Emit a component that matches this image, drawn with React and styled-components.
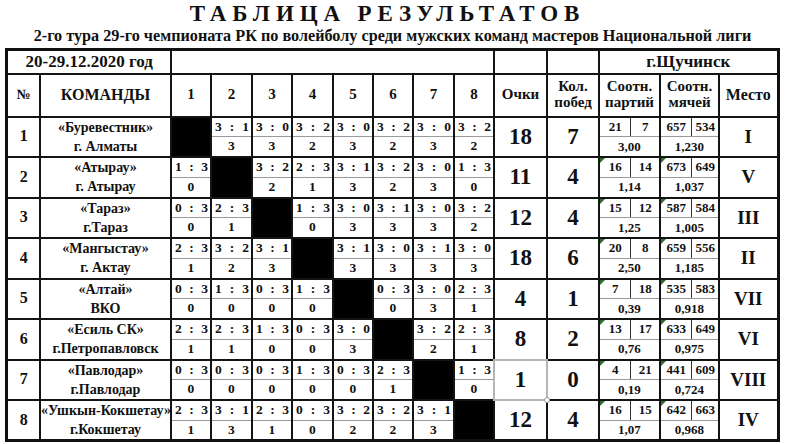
import React from "react";
import styled, { createGlobalStyle, css } from "styled-components";

const GlobalStyle = createGlobalStyle`
  html, body { margin: 0; padding: 0; background: #fff; }
  body { font-family: "Liberation Serif", "Times New Roman", serif; color: #111; }
`;

const Page = styled.div`
  width: 785px;
  display: flex;
  flex-direction: column;
  align-items: center;
`;

const Title = styled.h1`
  margin: 0 10px 0 0;
  font-size: 23px;
  line-height: 27px;
  font-weight: bold;
  letter-spacing: 5.9px;
  text-align: center;
`;

const Subtitle = styled.div`
  margin: 0 0 3px 0;
  font-size: 16.2px;
  line-height: 18px;
  font-weight: bold;
  text-align: center;
  white-space: nowrap;
`;

const Table = styled.table`
  border-collapse: collapse;
  table-layout: fixed;
  width: 771px;
  border: 3px solid #111;
  font-weight: bold;
`;

const Td = styled.td`
  position: relative;
  border: 2px solid #141414;
  padding: 0;
  text-align: center;
  vertical-align: middle;
  font-size: ${(p) => p.$size || 13}px;
  line-height: 1.05;
  white-space: nowrap;
  overflow: visible;
  ${(p) => p.$black && css`background: #000;`}
  ${(p) => p.$upper && css`border-bottom: 1px solid #9a9a9a;`}
  ${(p) => p.$lower && css`border-top: 1px solid #9a9a9a;`}
  ${(p) => p.$thinRight && css`border-right: 1px solid #333;`}
  ${(p) => p.$thinLeft && css`border-left: 1px solid #333;`}
  ${(p) => p.$selected && css`
    outline: 2px solid #b5b5b5;
    outline-offset: -1px;
    &::after {
      content: "";
      position: absolute;
      right: -4px;
      bottom: -4px;
      width: 4px;
      height: 4px;
      border: 1px solid #999;
      border-radius: 50%;
      background: #fff;
    }
  `}
`;

const Score = styled.div`
  display: flex;
  justify-content: space-between;
  padding: 0 2px 0 3px;
  font-size: 13.5px;
  line-height: 16px;
`;

const TeamName = styled.div`
  font-size: 14px;
  line-height: 19px;
`;

const Marker = styled.span`
  position: absolute;
  left: 0;
  top: 0;
  width: 0;
  height: 0;
  border-top: 5px solid #2f6b2a;
  border-right: 5px solid transparent;
`;

const teams = [
  {
    name: "«Буревестник»", city: "г. Алматы",
    res: [null, "3:1:3", "3:0:3", "3:2:2", "3:0:3", "3:2:2", "3:0:3", "3:2:2"],
    pts: 18, wins: 7, sets: [21, 7, "3,00"], balls: [657, 534, "1,230"], place: "I",
  },
  {
    name: "«Атырау»", city: "г. Атырау",
    res: ["1:3:0", null, "3:2:2", "2:3:1", "3:1:3", "3:2:2", "3:0:3", "1:3:0"],
    pts: 11, wins: 4, sets: [16, 14, "1,14"], balls: [673, 649, "1,037"], place: "V",
  },
  {
    name: "«Тараз»", city: "г.Тараз",
    res: ["0:3:0", "2:3:1", null, "1:3:0", "3:0:3", "3:1:3", "3:0:3", "3:2:2"],
    pts: 12, wins: 4, sets: [15, 12, "1,25"], balls: [587, 584, "1,005"], place: "III",
  },
  {
    name: "«Мангыстау»", city: "г. Актау",
    res: ["2:3:1", "3:2:2", "3:1:3", null, "3:1:3", "3:0:3", "3:1:3", "3:0:3"],
    pts: 18, wins: 6, sets: [20, 8, "2,50"], balls: [659, 556, "1,185"], place: "II",
  },
  {
    name: "«Алтай»", city: "ВКО",
    res: ["0:3:0", "1:3:0", "0:3:0", "1:3:0", null, "0:3:0", "3:0:3", "2:3:1"],
    pts: 4, wins: 1, sets: [7, 18, "0,39"], balls: [535, 583, "0,918"], place: "VII",
  },
  {
    name: "«Есиль СК»", city: "г.Петропавловск",
    res: ["2:3:1", "2:3:1", "1:3:0", "0:3:0", "3:0:3", null, "3:2:2", "2:3:1"],
    pts: 8, wins: 2, sets: [13, 17, "0,76"], balls: [633, 649, "0,975"], place: "VI",
  },
  {
    name: "«Павлодар»", city: "г.Павлодар",
    res: ["0:3:0", "0:3:0", "0:3:0", "1:3:0", "0:3:0", "2:3:1", null, "1:3:0"],
    pts: 1, wins: 0, sets: [4, 21, "0,19"], balls: [441, 609, "0,724"], place: "VIII", selected: true,
  },
  {
    name: "«Ушкын-Кокшетау»", city: "г.Кокшетау",
    res: ["2:3:1", "3:1:3", "2:3:1", "0:3:0", "3:2:2", "3:2:2", "3:1:3", null],
    pts: 12, wins: 4, sets: [16, 15, "1,07"], balls: [642, 663, "0,968"], place: "IV",
  },
];

const widths = [33, 131, 40, 41, 40, 41, 40, 40, 41, 40, 53, 52, 32, 29, 32, 27, 59];

const TopRow = styled.tr`height: 24px;`;
const HeadRow = styled.tr`height: 43px;`;
const HalfRow = styled.tr`height: ${(p) => p.$h}px;`;

function TeamRows({ t, i }) {
  const mark = i > 0;
  return (
    <>
      <HalfRow $h={20}>
        <Td rowSpan={2} $size={16}>{i + 1}</Td>
        <Td rowSpan={2}>
          <TeamName>{t.name}</TeamName>
          <TeamName>{t.city}</TeamName>
        </Td>
        {t.res.map((r, j) =>
          r === null ? (
            <Td key={j} rowSpan={2} $black />
          ) : (
            <Td key={j} $upper>
              <Score>
                <span>{r.split(":")[0]}</span>
                <span>:</span>
                <span>{r.split(":")[1]}</span>
              </Score>
            </Td>
          )
        )}
        <Td rowSpan={2} $size={23} $selected={t.selected}>{t.pts}</Td>
        <Td rowSpan={2} $size={23}>{t.wins}</Td>
        <Td $upper $thinRight $size={13}>
          {mark && <Marker />}
          {t.sets[0]}
        </Td>
        <Td $upper $thinLeft $size={13}>{t.sets[1]}</Td>
        <Td $upper $thinRight $size={13}>
          {mark && <Marker />}
          {t.balls[0]}
        </Td>
        <Td $upper $thinLeft $size={13}>{t.balls[1]}</Td>
        <Td rowSpan={2} $size={19}>{t.place}</Td>
      </HalfRow>
      <HalfRow $h={20.5}>
        {t.res.map((r, j) =>
          r === null ? null : (
            <Td key={j} $lower $size={13.5}>{r.split(":")[2]}</Td>
          )
        )}
        <Td colSpan={2} $lower $size={13}>{t.sets[2]}</Td>
        <Td colSpan={2} $lower $size={13}>{t.balls[2]}</Td>
      </HalfRow>
    </>
  );
}

export default function App() {
  return (
    <>
      <GlobalStyle />
      <Page>
        <Title>ТАБЛИЦА РЕЗУЛЬТАТОВ</Title>
        <Subtitle>
          2-го тура 29-го чемпионата РК по волейболу среди мужских команд мастеров Национальной лиги
        </Subtitle>
        <Table>
          <colgroup>
            {widths.map((w, i) => (
              <col key={i} style={{ width: w }} />
            ))}
          </colgroup>
          <tbody>
            <TopRow>
              <Td colSpan={2} $size={17}>20-29.12.2020 год</Td>
              <Td colSpan={8} />
              <Td />
              <Td />
              <Td colSpan={5} $size={17}>г.Щучинск</Td>
            </TopRow>
            <HeadRow>
              <Td $size={14}>№</Td>
              <Td $size={16}>КОМАНДЫ</Td>
              {[1, 2, 3, 4, 5, 6, 7, 8].map((n) => (
                <Td key={n} $size={15}>{n}</Td>
              ))}
              <Td $size={15}>Очки</Td>
              <Td $size={15}>Кол.<br />побед</Td>
              <Td colSpan={2} $size={15}>Соотн.<br />партий</Td>
              <Td colSpan={2} $size={15}>Соотн.<br />мячей</Td>
              <Td $size={16}>Место</Td>
            </HeadRow>
            {teams.map((t, i) => (
              <TeamRows key={i} t={t} i={i} />
            ))}
          </tbody>
        </Table>
      </Page>
    </>
  );
}
